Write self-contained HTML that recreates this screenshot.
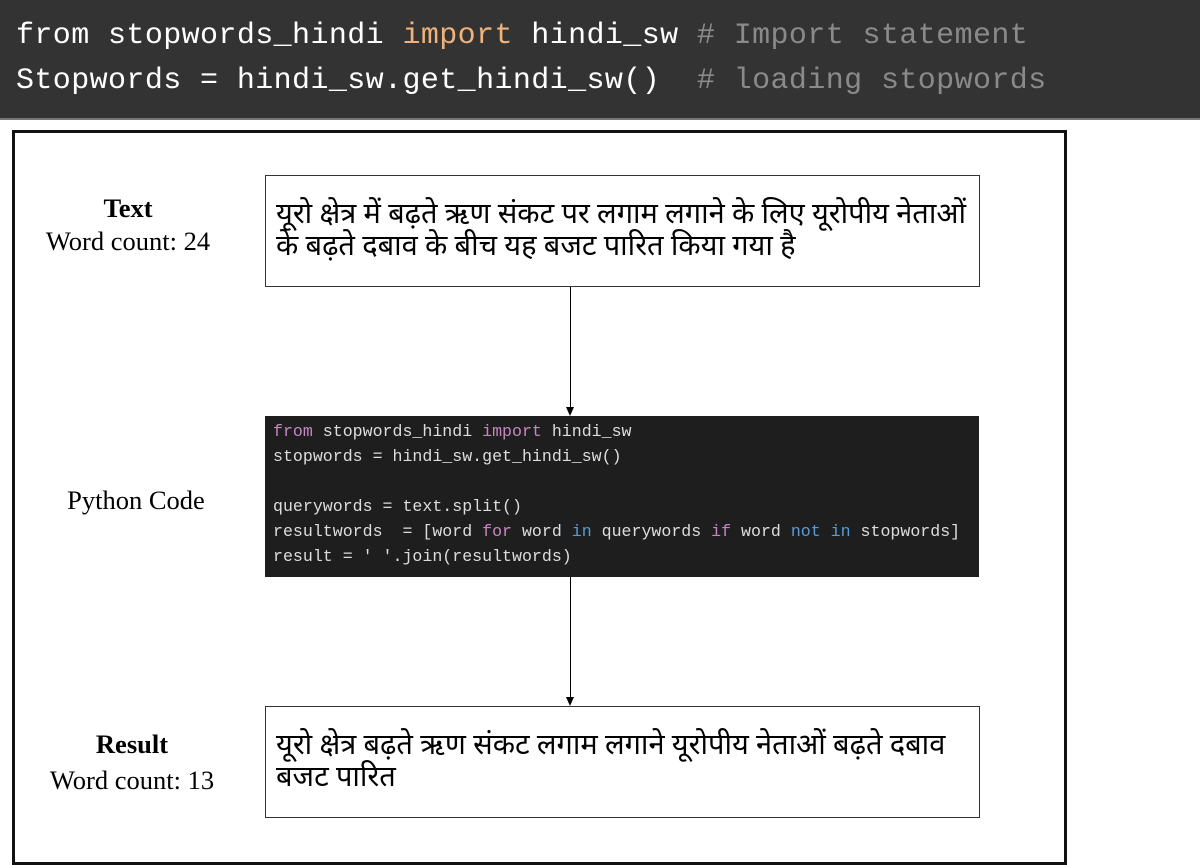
<!DOCTYPE html>
<html><head><meta charset="utf-8"><style>
body{margin:0;width:1200px;height:864px;background:#fff;position:relative;overflow:hidden;font-family:"Liberation Serif",serif}
.top{position:absolute;left:0;top:0;width:1200px;height:118px;background:#333;border-bottom:2px solid #777}
.top pre{margin:0;position:absolute;left:16px;top:14px;font-family:"Liberation Mono",monospace;font-size:30px;line-height:45px;color:#fff;letter-spacing:0.4px}
.k{color:#f0b27a}.c{color:#8a8a8a}
.outer{position:absolute;left:12px;top:130px;width:1049px;height:729px;border:3px solid #111}
.box{position:absolute;left:265px;width:715px;height:112px;border:1px solid #333;font-size:29px;line-height:32px;padding:22px 10px 0;box-sizing:border-box}
.lbl{position:absolute;text-align:center;font-size:26.5px;width:220px}
.code{position:absolute;left:265px;top:416px;width:714px;height:161px;background:#1e1e1e}
.code pre{margin:0;position:absolute;left:8px;top:3px;font-family:"Liberation Mono",monospace;font-size:16.6px;line-height:25px;color:#ddd}
.p{color:#c586c0}.b{color:#569cd6}
.line{position:absolute;left:570px;width:1px;background:#000}
.arr{position:absolute;left:566px;width:0;height:0;border-left:4px solid transparent;border-right:4px solid transparent;border-top:9px solid #000}
</style></head><body>
<div class="top"><pre>from stopwords_hindi <span class="k">import</span> hindi_sw <span class="c"># Import statement</span>
Stopwords = hindi_sw.get_hindi_sw()  <span class="c"># loading stopwords</span></pre></div>
<div class="outer"></div>
<div class="lbl" style="left:18px;top:192px;line-height:33px"><b>Text</b><br>Word count: 24</div>
<div class="box" style="top:175px">यूरो क्षेत्र में बढ़ते ऋण संकट पर लगाम लगाने के लिए यूरोपीय नेताओं के बढ़ते दबाव के बीच यह बजट पारित किया गया है</div>
<div class="line" style="top:287px;height:120px"></div><div class="arr" style="top:407px"></div>
<div class="lbl" style="left:26px;top:485px">Python Code</div>
<div class="code"><pre><span class="p">from</span> stopwords_hindi <span class="p">import</span> hindi_sw
stopwords = hindi_sw.get_hindi_sw()

querywords = text.split()
resultwords  = [word <span class="p">for</span> word <span class="b">in</span> querywords <span class="p">if</span> word <span class="b">not in</span> stopwords]
result = ' '.join(resultwords)</pre></div>
<div class="line" style="top:577px;height:120px"></div><div class="arr" style="top:697px"></div>
<div class="lbl" style="left:22px;top:726px;line-height:36px"><b>Result</b><br>Word count: 13</div>
<div class="box" style="top:706px">यूरो क्षेत्र बढ़ते ऋण संकट लगाम लगाने यूरोपीय नेताओं बढ़ते दबाव बजट पारित</div>
</body></html>
